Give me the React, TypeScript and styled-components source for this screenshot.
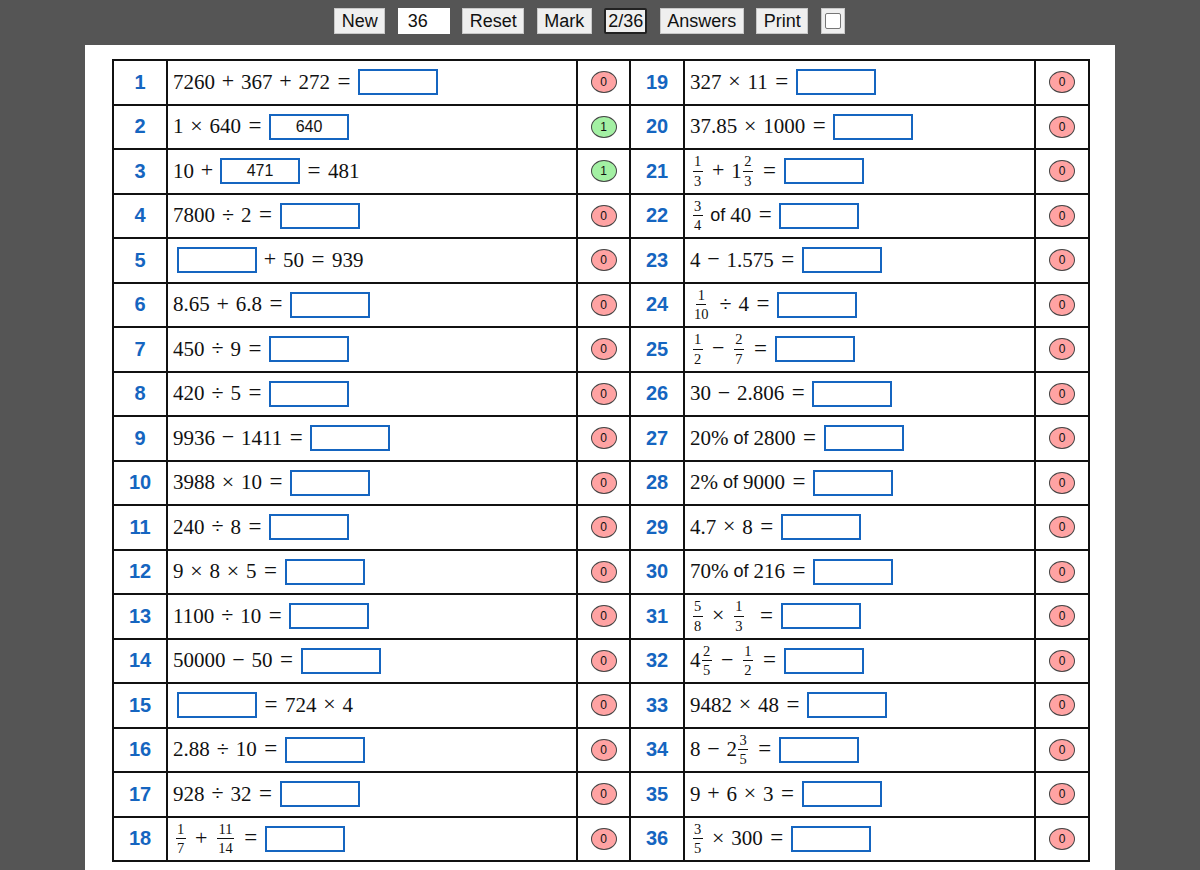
import React from 'react';
import styled, { createGlobalStyle } from 'styled-components';

const GlobalStyle = createGlobalStyle`
  body {
    margin: 0;
    background: #555;
    font-family: 'Liberation Sans', Arial, sans-serif;
  }
`;

type Row = { n: number; expr: string; score: number };

// tokens: ? = empty box, ?640 = filled box, a/b = fraction, w_a/b = mixed number, ~ = extra space
const left: Row[] = [
  { n: 1, expr: '7260 + 367 + 272 = ?', score: 0 },
  { n: 2, expr: '1 × 640 = ?640', score: 1 },
  { n: 3, expr: '10 + ?471 = 481', score: 1 },
  { n: 4, expr: '7800 ÷ 2 = ?', score: 0 },
  { n: 5, expr: '? + 50 = 939', score: 0 },
  { n: 6, expr: '8.65 + 6.8 = ?', score: 0 },
  { n: 7, expr: '450 ÷ 9 = ?', score: 0 },
  { n: 8, expr: '420 ÷ 5 = ?', score: 0 },
  { n: 9, expr: '9936 − 1411 = ?', score: 0 },
  { n: 10, expr: '3988 × 10 = ?', score: 0 },
  { n: 11, expr: '240 ÷ 8 = ?', score: 0 },
  { n: 12, expr: '9 × 8 × 5 = ?', score: 0 },
  { n: 13, expr: '1100 ÷ 10 = ?', score: 0 },
  { n: 14, expr: '50000 − 50 = ?', score: 0 },
  { n: 15, expr: '? = 724 × 4', score: 0 },
  { n: 16, expr: '2.88 ÷ 10 = ?', score: 0 },
  { n: 17, expr: '928 ÷ 32 = ?', score: 0 },
  { n: 18, expr: '1/7 + 11/14 = ?', score: 0 },
];

const right: Row[] = [
  { n: 19, expr: '327 × 11 = ?', score: 0 },
  { n: 20, expr: '37.85 × 1000 = ?', score: 0 },
  { n: 21, expr: '1/3 + 1_2/3 = ?', score: 0 },
  { n: 22, expr: '3/4 of 40 = ?', score: 0 },
  { n: 23, expr: '4 − 1.575 = ?', score: 0 },
  { n: 24, expr: '1/10 ÷ 4 = ?', score: 0 },
  { n: 25, expr: '1/2 − 2/7 = ?', score: 0 },
  { n: 26, expr: '30 − 2.806 = ?', score: 0 },
  { n: 27, expr: '20% of 2800 = ?', score: 0 },
  { n: 28, expr: '2% of 9000 = ?', score: 0 },
  { n: 29, expr: '4.7 × 8 = ?', score: 0 },
  { n: 30, expr: '70% of 216 = ?', score: 0 },
  { n: 31, expr: '5/8 × 1/3 ~ = ?', score: 0 },
  { n: 32, expr: '4_2/5 − 1/2 = ?', score: 0 },
  { n: 33, expr: '9482 × 48 = ?', score: 0 },
  { n: 34, expr: '8 − 2_3/5 = ?', score: 0 },
  { n: 35, expr: '9 + 6 × 3 = ?', score: 0 },
  { n: 36, expr: '3/5 × 300 = ?', score: 0 },
];

const Toolbar = styled.div`
  height: 45px;
  box-sizing: border-box;
  padding: 8px 21px 0 0;
  display: flex;
  justify-content: center;
  align-items: flex-start;
  gap: 12.5px;
`;

const ToolButton = styled.button`
  height: 26px;
  padding: 0 6.5px;
  border: 1px solid #c8c8c8;
  border-radius: 0;
  background: #efefef;
  color: #111;
  font: 18px 'Liberation Sans', Arial, sans-serif;
  line-height: 24px;
`;

const CountInput = styled.input`
  width: 52px;
  height: 26px;
  box-sizing: border-box;
  padding: 0 0 0 10px;
  border: none;
  background: #fff;
  font: 18px 'Liberation Sans', Arial, sans-serif;
  color: #111;
`;

const ScoreBox = styled.span`
  height: 26px;
  box-sizing: border-box;
  padding: 0 2px;
  border: 2px solid #222;
  border-radius: 2px;
  background: #efefef;
  font-size: 18px;
  line-height: 22px;
  color: #111;
`;

const CheckButton = styled.span`
  width: 24px;
  height: 26px;
  box-sizing: border-box;
  border: 1px solid #c8c8c8;
  background: #efefef;
  display: flex;
  align-items: center;
  justify-content: center;
`;

const CheckSquare = styled.span`
  width: 16px;
  height: 16px;
  box-sizing: border-box;
  border: 1px solid #767676;
  border-radius: 2px;
  background: #fff;
`;

const Page = styled.div`
  width: 1030px;
  min-height: 825px;
  margin: 0 auto;
  box-sizing: border-box;
  padding: 14px 27px 14px;
  background: #fff;
`;

const Sheet = styled.table`
  width: 976px;
  table-layout: fixed;
  border-collapse: collapse;
`;

const SheetRow = styled.tr`
  height: 44.5px;
`;

const Cell = styled.td`
  border: 2px solid #111;
  padding: 0;
  vertical-align: middle;
`;

const NumCell = styled(Cell)`
  text-align: center;
  font: bold 20px 'Liberation Sans', Arial, sans-serif;
  color: #1565c0;
`;

const ExprCell = styled(Cell)`
  padding-left: 5px;
`;

const MarkCell = styled(Cell)`
  text-align: center;
`;

const Mark = styled.span<{ $ok: boolean }>`
  display: inline-block;
  width: 26px;
  height: 22px;
  box-sizing: border-box;
  border: 1px solid #444;
  border-radius: 50%;
  background: ${(p) => (p.$ok ? '#a3f0a3' : '#ffa3a3')};
  font: 12px 'Liberation Sans', Arial, sans-serif;
  line-height: 20px;
  color: #111;
  vertical-align: middle;
`;

const Expr = styled.div`
  display: flex;
  align-items: center;
  font-family: 'Liberation Serif', 'Times New Roman', serif;
  font-size: 21px;
  color: #111;
  white-space: nowrap;
`;

const Num = styled.span``;

const Op = styled.span<{ $rel?: boolean }>`
  display: inline-block;
  width: 16px;
  margin: 0 ${(p) => (p.$rel ? '6px' : '5px')} 2px;
  text-align: center;
  font-size: ${(p) => (p.$rel ? '23px' : '22px')};
  line-height: 1;
  font-weight: 300;
`;

const Word = styled.span`
  font-family: 'Liberation Sans', Arial, sans-serif;
  font-size: 18px;
  margin: 0 5px;
`;

const Space = styled.span`
  width: 6px;
`;

const Frac = styled.span<{ $tight?: boolean }>`
  display: inline-flex;
  flex-direction: column;
  align-items: center;
  margin: ${(p) => (p.$tight ? '0 2.5px 0 1px' : '0 2.5px')};
  font-size: 14.5px;
  line-height: 1;
`;

const FracNum = styled.span`
  padding: 0 1.5px 2px;
  border-bottom: 1px solid #111;
`;

const FracDen = styled.span`
  padding: 2px 1.5px 0;
`;

const AnswerBox = styled.input<{ $lead?: boolean }>`
  width: 80px;
  height: 26px;
  box-sizing: border-box;
  margin: 0 0 0 ${(p) => (p.$lead ? '4px' : '0')};
  padding: 0;
  border: 2px solid #1565c0;
  background: #fff;
  font: 16px 'Liberation Sans', Arial, sans-serif;
  color: #111;
  text-align: center;
`;

const Fraction = ({ n, d, tight }: { n: string; d: string; tight?: boolean }) => (
  <Frac $tight={tight}>
    <FracNum>{n}</FracNum>
    <FracDen>{d}</FracDen>
  </Frac>
);

const Expression = ({ expr }: { expr: string }) => {
  const tokens = expr.split(' ');
  return (
    <Expr>
      {tokens.map((t, i) => {
        if (t.startsWith('?'))
          return <AnswerBox key={i} $lead={i === 0} defaultValue={t.slice(1)} />;
        if (t === '~') return <Space key={i} />;
        if (t === '=') return <Op key={i} $rel>=</Op>;
        if ('+−×÷'.includes(t)) return <Op key={i}>{t}</Op>;
        if (t === 'of') return <Word key={i}>of</Word>;
        if (t.includes('_')) {
          const [w, f] = t.split('_');
          const [n, d] = f.split('/');
          return (
            <React.Fragment key={i}>
              <Num>{w}</Num>
              <Fraction n={n} d={d} tight />
            </React.Fragment>
          );
        }
        if (t.includes('/')) {
          const [n, d] = t.split('/');
          return <Fraction key={i} n={n} d={d} />;
        }
        return <Num key={i}>{t}</Num>;
      })}
    </Expr>
  );
};

const RowHalf = ({ row }: { row: Row }) => (
  <>
    <NumCell>{row.n}</NumCell>
    <ExprCell>
      <Expression expr={row.expr} />
    </ExprCell>
    <MarkCell>
      <Mark $ok={row.score > 0}>{row.score}</Mark>
    </MarkCell>
  </>
);

export default function App() {
  return (
    <>
      <GlobalStyle />
      <Toolbar>
        <ToolButton>New</ToolButton>
        <CountInput defaultValue="36" />
        <ToolButton>Reset</ToolButton>
        <ToolButton>Mark</ToolButton>
        <ScoreBox>2/36</ScoreBox>
        <ToolButton>Answers</ToolButton>
        <ToolButton>Print</ToolButton>
        <CheckButton>
          <CheckSquare />
        </CheckButton>
      </Toolbar>
      <Page>
        <Sheet>
          <colgroup>
            <col style={{ width: 54 }} />
            <col style={{ width: 410 }} />
            <col style={{ width: 53 }} />
            <col style={{ width: 54 }} />
            <col style={{ width: 351 }} />
            <col style={{ width: 54 }} />
          </colgroup>
          <tbody>
            {left.map((row, i) => (
              <SheetRow key={row.n}>
                <RowHalf row={row} />
                <RowHalf row={right[i]} />
              </SheetRow>
            ))}
          </tbody>
        </Sheet>
      </Page>
    </>
  );
}
